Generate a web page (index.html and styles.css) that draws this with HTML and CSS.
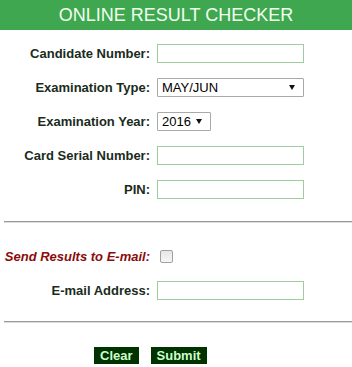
FILE: index.html
```html
<!DOCTYPE html>
<html>
<head>
<meta charset="utf-8">
<link rel="stylesheet" href="styles.css">
</head>
<body>
<div class="header">ONLINE RESULT CHECKER</div>
<form class="form">
  <div class="section first">
    <div class="row"><label class="lbl">Candidate Number:</label><input class="txt" type="text"></div>
    <div class="row"><label class="lbl">Examination Type:</label><span class="sel wide">MAY/JUN<i class="arrow"></i></span></div>
    <div class="row"><label class="lbl">Examination Year:</label><span class="sel narrow">2016<i class="arrow"></i></span></div>
    <div class="row"><label class="lbl">Card Serial Number:</label><input class="txt" type="text"></div>
    <div class="row"><label class="lbl">PIN:</label><input class="txt" type="text"></div>
  </div>
  <div class="rule r1"></div>
  <div class="section second">
    <div class="row"><label class="lbl send">Send Results to E-mail:</label><span class="ctl"><input class="chk" type="checkbox"></span></div>
    <div class="row"><label class="lbl">E-mail Address:</label><input class="txt" type="text"></div>
  </div>
  <div class="rule r2"></div>
  <div class="buttons">
    <button class="btn" type="button">Clear</button>
    <button class="btn" type="button">Submit</button>
  </div>
</form>
</body>
</html>
```
FILE: styles.css
```css
html, body {
  margin: 0;
  padding: 0;
  background: #ffffff;
  font-family: "Liberation Sans", Arial, sans-serif;
}
.header {
  height: 30px;
  background: #3fa74f;
  color: #f0fff0;
  font-size: 18px;
  line-height: 30px;
  text-align: center;
}
.form {
  margin: 0;
}
.section.first {
  padding-top: 6px;
}
.row {
  display: grid;
  grid-template-columns: 150px 1fr;
  column-gap: 7px;
  align-items: center;
  height: 34px;
}
.lbl {
  text-align: right;
  font-size: 13px;
  font-weight: bold;
  color: #1a2b1c;
  white-space: nowrap;
}
.lbl.send {
  color: #8a0c0c;
  font-style: italic;
}
.txt {
  box-sizing: border-box;
  width: 147px;
  height: 19px;
  margin: 0;
  border: 1px solid #9fcd9f;
  background: #fff;
  padding: 0 3px;
  outline: none;
}
.sel {
  position: relative;
  box-sizing: border-box;
  display: block;
  height: 19px;
  border: 1px solid #a9a9a9;
  border-radius: 1px;
  background: #fff;
  font-size: 13px;
  line-height: 17px;
  color: #000;
  padding-left: 4px;
}
.sel.wide { width: 147px; }
.sel.narrow { width: 54px; }
.arrow {
  position: absolute;
  right: 8px;
  top: 6px;
  width: 0;
  height: 0;
  border-left: 3px solid transparent;
  border-right: 3px solid transparent;
  border-top: 5px solid #111;
}
.ctl {
  display: flex;
  align-items: center;
}
.chk {
  appearance: none;
  -webkit-appearance: none;
  box-sizing: border-box;
  width: 13px;
  height: 13px;
  margin: 0 0 0 3px;
  border: 1px solid #a0a0a0;
  border-radius: 2px;
  background: linear-gradient(#e6e6e6, #f6f6f6);
}
.rule {
  margin-left: 4px;
  height: 0;
  border-top: 1px solid #9a9a9a;
  border-bottom: 1px solid #dcdcdc;
}
.r1 { margin-top: 15px; }
.section.second { margin-top: 16px; }
.r2 { margin-top: 14px; }
.buttons {
  display: flex;
  gap: 12px;
  padding-left: 94px;
  margin-top: 24px;
}
.btn {
  height: 17px;
  margin: 0;
  border: 0;
  border-radius: 0;
  padding: 0 6px;
  background: #003300;
  color: #ccffcc;
  font-family: "Liberation Sans", Arial, sans-serif;
  font-size: 13px;
  font-weight: bold;
  line-height: 17px;
}
```
